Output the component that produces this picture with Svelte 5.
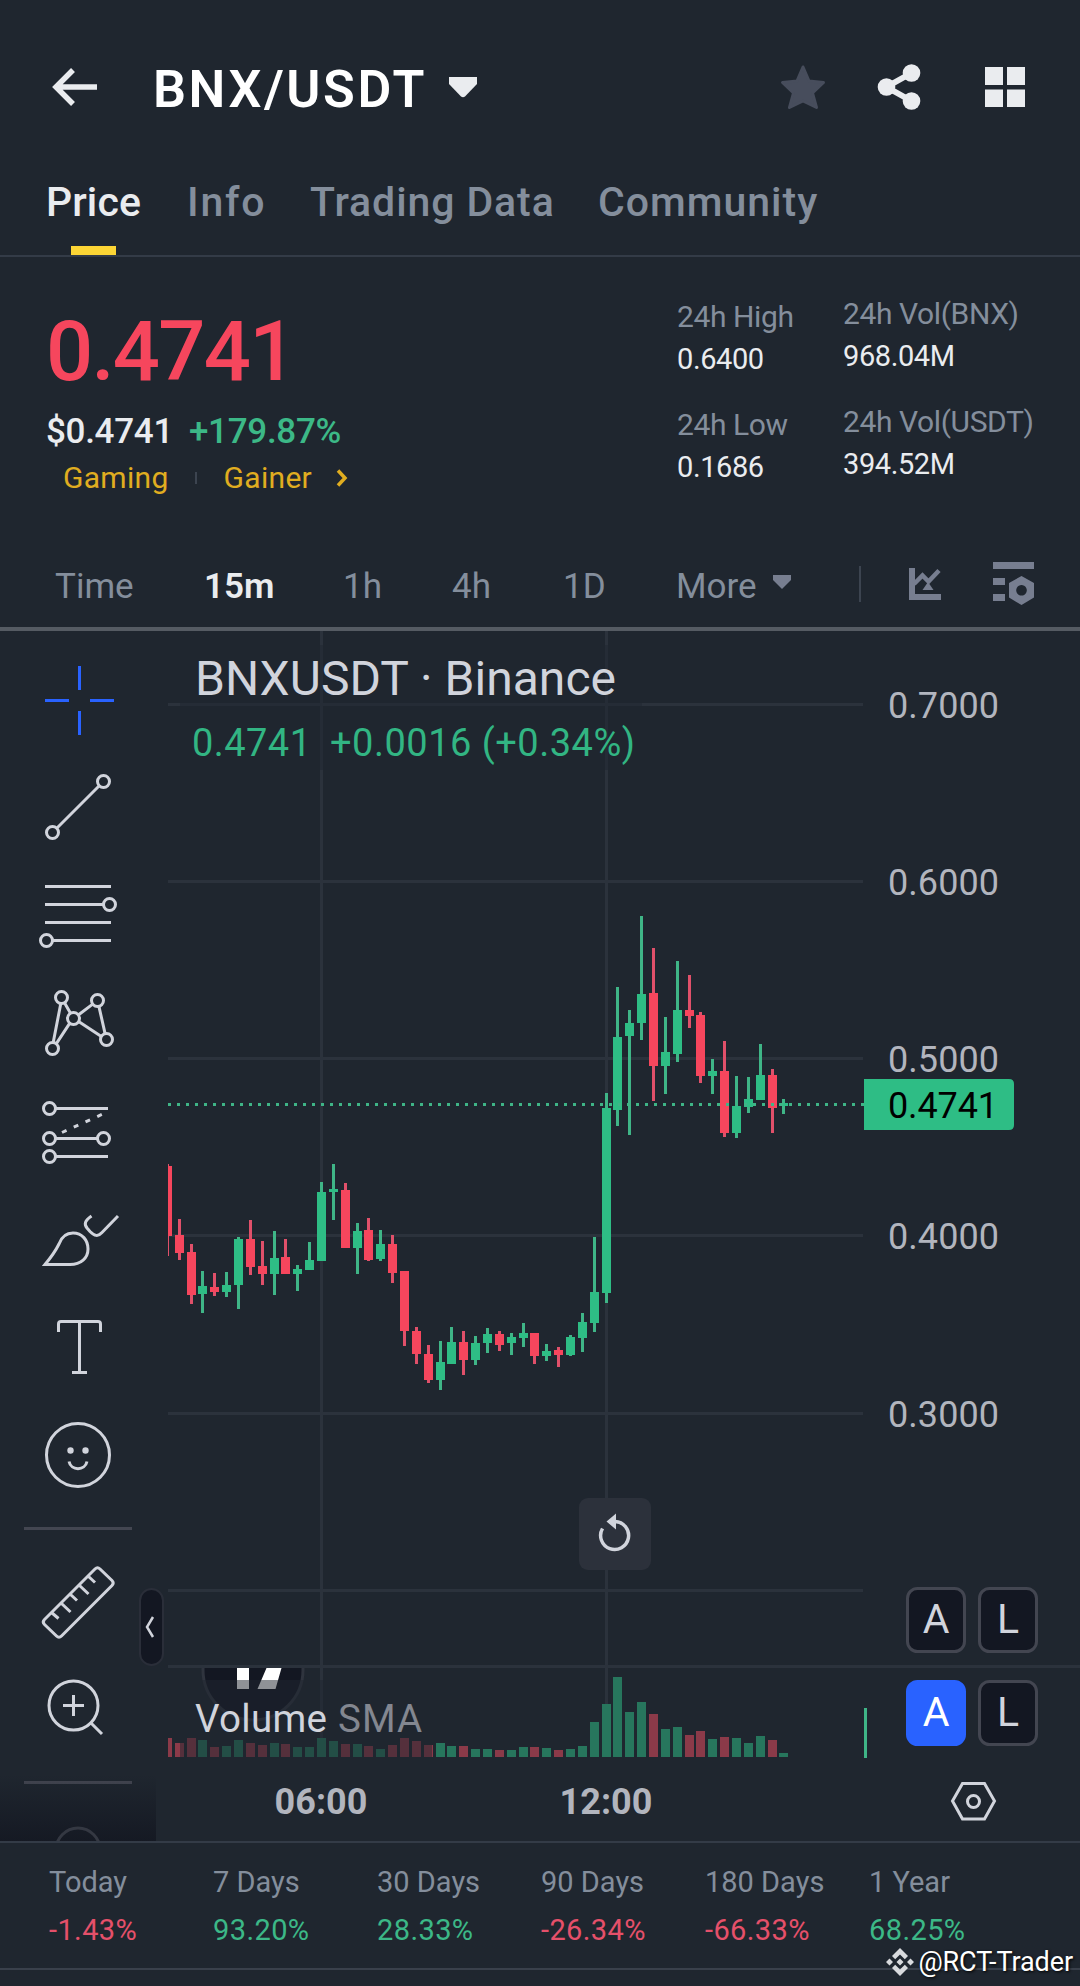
<script>
  const tabs = [
    { name: 'Price', width: 141, spacing: 0.1 },
    { name: 'Info', width: 123, spacing: 1.8 },
    { name: 'Trading Data', width: 288, spacing: 0.9 },
    { name: 'Community', width: 230, spacing: 1 }
  ];

  const stats = [
    { label: '24h High', value: '0.6400' },
    { label: '24h Vol(BNX)', value: '968.04M' },
    { label: '24h Low', value: '0.1686' },
    { label: '24h Vol(USDT)', value: '394.52M' }
  ];

  const intervals = [
    { name: 'Time', width: 149 },
    { name: '15m', width: 139 },
    { name: '1h', width: 109 },
    { name: '4h', width: 111 },
    { name: '1D', width: 113 }
  ];

  const performance = [
    { label: 'Today', value: '-1.43%' },
    { label: '7 Days', value: '93.20%' },
    { label: '30 Days', value: '28.33%' },
    { label: '90 Days', value: '-26.34%' },
    { label: '180 Days', value: '-66.33%' },
    { label: '1 Year', value: '68.25%' }
  ];

  const axis = [
    { label: '0.7000', y: 704 },
    { label: '0.6000', y: 881 },
    { label: '0.5000', y: 1058 },
    { label: '0.4000', y: 1235 },
    { label: '0.3000', y: 1413 }
  ];

  // up, high, body top, body bottom, low, volume top
  const candles = [
    [0, 1164, 1166, 1236, 1256, 1738],
    [0, 1219, 1235, 1253, 1260, 1743],
    [0, 1244, 1252, 1295, 1304, 1738],
    [1, 1271, 1286, 1294, 1313, 1740],
    [0, 1273, 1287, 1292, 1296, 1747],
    [1, 1272, 1285, 1292, 1297, 1746],
    [1, 1237, 1239, 1285, 1309, 1740],
    [0, 1220, 1239, 1267, 1275, 1743],
    [0, 1241, 1266, 1274, 1285, 1745],
    [1, 1231, 1258, 1274, 1295, 1743],
    [0, 1239, 1257, 1274, 1274, 1744],
    [1, 1265, 1269, 1274, 1291, 1747],
    [1, 1242, 1260, 1270, 1270, 1747],
    [1, 1182, 1192, 1261, 1261, 1738],
    [1, 1164, 1189, 1192, 1220, 1741],
    [0, 1183, 1190, 1248, 1248, 1744],
    [1, 1223, 1231, 1248, 1274, 1744],
    [0, 1218, 1230, 1260, 1261, 1746],
    [1, 1230, 1244, 1259, 1261, 1749],
    [0, 1235, 1244, 1273, 1283, 1745],
    [0, 1271, 1271, 1331, 1346, 1738],
    [0, 1327, 1331, 1354, 1364, 1741],
    [0, 1345, 1354, 1380, 1383, 1745],
    [1, 1341, 1362, 1380, 1390, 1743],
    [1, 1327, 1342, 1364, 1364, 1746],
    [0, 1331, 1342, 1360, 1375, 1746],
    [1, 1336, 1343, 1360, 1365, 1749],
    [1, 1328, 1334, 1343, 1353, 1749],
    [0, 1331, 1334, 1345, 1351, 1750],
    [1, 1333, 1337, 1343, 1355, 1750],
    [1, 1323, 1333, 1338, 1347, 1747],
    [0, 1333, 1333, 1356, 1364, 1747],
    [1, 1344, 1351, 1356, 1361, 1748],
    [0, 1347, 1350, 1355, 1367, 1750],
    [1, 1335, 1337, 1355, 1356, 1749],
    [1, 1313, 1322, 1338, 1352, 1746],
    [1, 1237, 1292, 1323, 1332, 1722],
    [1, 1093, 1108, 1293, 1303, 1704],
    [1, 987, 1037, 1110, 1126, 1677],
    [1, 1010, 1023, 1036, 1135, 1712],
    [1, 916, 994, 1023, 1040, 1702],
    [0, 948, 993, 1066, 1101, 1714],
    [1, 1017, 1052, 1066, 1094, 1729],
    [1, 961, 1010, 1054, 1062, 1727],
    [0, 975, 1010, 1016, 1028, 1735],
    [0, 1012, 1015, 1076, 1083, 1731],
    [1, 1059, 1071, 1076, 1094, 1739],
    [0, 1041, 1071, 1133, 1137, 1737],
    [1, 1076, 1106, 1133, 1138, 1738],
    [1, 1077, 1099, 1107, 1113, 1743],
    [1, 1044, 1075, 1100, 1100, 1736],
    [0, 1069, 1075, 1108, 1133, 1740],
    [1, 1099, 1103, 1106, 1114, 1753]
  ].map(([up, high, top, bottom, low, vol], i) => ({
    x: Math.floor(167.33 + 11.857 * i),
    up: up === 1,
    high,
    top,
    bottom,
    low,
    vol
  }));
</script>

<div class="screen">
  <header>
    <svg class="back" viewBox="0 0 46 40" width="46" height="40">
      <path d="M45 20H5M21 3L4 20l17 17" fill="none" stroke="#eaecef" stroke-width="5.5" />
    </svg>
    <h1>BNX/USDT</h1>
    <svg class="caret" viewBox="0 0 30 22" width="30" height="22">
      <path d="M1 1h28v7L17 20.500q-2 1.500-4 0L1 8z" fill="#eaecef" />
    </svg>
    <div class="actions">
      <svg viewBox="0 0 46 46" width="46" height="46">
        <path d="M23 3l6 14 14.500 1.500-11 10.500 4 14.500L23 37 9.500 43.500l4-14.500-11-10.500L17 17z" fill="#474d5c" stroke="#474d5c" stroke-width="3" stroke-linejoin="round" />
      </svg>
      <svg viewBox="0 0 44 46" width="44" height="46">
        <path d="M34.500 9L9.500 23l25 14" fill="none" stroke="#eaecef" stroke-width="6" />
        <circle cx="34.500" cy="9" r="8.800" fill="#eaecef" />
        <circle cx="9.500" cy="23" r="8.800" fill="#eaecef" />
        <circle cx="34.500" cy="37" r="8.800" fill="#eaecef" />
      </svg>
      <svg viewBox="0 0 40 40" width="40" height="40">
        <path d="M0 0h18v18H0zM22 0h18v18H22zM0 22.500h18V40H0zM22 22.500h18V40H22z" fill="#eaecef" />
      </svg>
    </div>
  </header>

  <nav class="tabs">
    {#each tabs as tab, i}
      <div class="tab" class:active={i === 0} style="width: {tab.width}px; letter-spacing: {tab.spacing}px">{tab.name}</div>
    {/each}
  </nav>

  <section class="summary">
    <div class="quote">
      <div class="price">0.4741</div>
      <div class="change"><span>$0.4741</span><span class="up">+179.87%</span></div>
      <div class="tags">
        <span class="gaming">Gaming</span>
        <i></i>
        <span class="gainer">Gainer</span>
        <svg viewBox="0 0 12 18" width="12" height="18">
          <path d="M2 1.500L9 9l-7 7.500" fill="none" stroke="#e0ad20" stroke-width="3.500" />
        </svg>
      </div>
    </div>
    <div class="stats">
      {#each stats as stat, i}
        <div class="stat" class:second={i % 2 === 1}>
          <span class="label">{stat.label}</span>
          <span class="value">{stat.value}</span>
        </div>
      {/each}
    </div>
  </section>

  <div class="intervals">
    {#each intervals as item}
      <span class:active={item.name === '15m'} style="width: {item.width}px">{item.name}</span>
    {/each}
    <span class="more">More</span>
    <svg class="small-caret" viewBox="0 0 18 14" width="18" height="14">
      <path d="M0 0h18v5L9 14 0 5z" fill="#777e90" />
    </svg>
    <i></i>
    <svg class="indicator" viewBox="0 0 32 32" width="32" height="32">
      <path d="M3 0v29h29" fill="none" stroke="#777e90" stroke-width="6" />
      <path d="M5 16l8.500-8.500 6 6L30 2.500" fill="none" stroke="#777e90" stroke-width="4.500" />
      <path d="M19 14l5.500 8h-11z" fill="#777e90" />
    </svg>
    <svg viewBox="0 0 42 44" width="42" height="44">
      <path d="M0 0h41v7H0zM0 16h12v7H0zM0 32h12v7H0z" fill="#777e90" />
      <path fill-rule="evenodd" d="M28.500 14L41 21v14.500l-12.500 7.500L16 35.500V21zM28.500 23a5.300 5.300 0 1 0 .010 0z" fill="#777e90" />
    </svg>
  </div>

  <main>
    <aside>
      <svg class="tool" viewBox="0 0 157 108">
        <path d="M79.500 20v24M79.500 65v24M45 54.500h24M90 54.500h24" stroke="#2962ff" />
      </svg>
      <svg class="tool" viewBox="0 0 157 108">
        <circle cx="52.500" cy="78.500" r="6" />
        <circle cx="103.500" cy="27.500" r="6" />
        <path d="M57 74l42-42" />
      </svg>
      <svg class="tool" viewBox="0 0 157 108">
        <path d="M45 24.500h66M45 42.500h58M45 60.500h66M53 78.500h58" />
        <circle cx="109.500" cy="42.500" r="6" />
        <circle cx="46.500" cy="78.500" r="6" />
      </svg>
      <svg class="tool" viewBox="0 0 157 108">
        <path d="M60.800 33.500L53.200 72.500M64.500 32.700l6 10.600M69.800 53.200l-13.600 20.600M78.300 45l14.400-10.900M78.600 51.600l22.800 14.800M98.900 36.400l6.200 27.200" />
        <circle cx="61.500" cy="27.500" r="6" />
        <circle cx="97.500" cy="30.500" r="6" />
        <circle cx="73.500" cy="48.500" r="6" />
        <circle cx="106.500" cy="69.500" r="6" />
        <circle cx="52.500" cy="78.500" r="6" />
      </svg>
      <svg class="tool" viewBox="0 0 157 108">
        <path d="M56 30.500h52M56 60.500h41M56 78.500h52" />
        <path d="M62 54.500l42-19" stroke-dasharray="5 7.900" />
        <circle cx="49.500" cy="30.500" r="6" />
        <circle cx="49.500" cy="60.500" r="6" />
        <circle cx="103.500" cy="60.500" r="6" />
        <circle cx="49.500" cy="78.500" r="6" />
      </svg>
      <svg class="tool" viewBox="0 0 157 108">
        <path d="M45 78.500C53 69 56 64 59 58c2.500-7 7-11 14-11 9 0 15 7 15 16 0 9-7 15.500-18 15.500zM91.500 30c-7 5-7.500 8-4.500 12l3 3.500c4.500 4.500 8 5.500 12 1L118 30" />
      </svg>
      <svg class="tool" viewBox="0 0 157 108">
        <path d="M58.500 38v-8q0-2.500 2.500-2.500h37q2.500 0 2.500 2.500v8M79.500 28v50M72 78.500h15" />
      </svg>
      <svg class="tool" viewBox="0 0 157 108">
        <circle cx="78" cy="53" r="31.500" />
        <circle cx="70.500" cy="48.500" r="3.200" class="dot" />
        <circle cx="85.500" cy="48.500" r="3.200" class="dot" />
        <path d="M69 59.500c2 9.500 16 9.500 18 0" />
      </svg>
      <hr />
      <svg class="tool" viewBox="0 0 157 108">
        <path d="M44.500 71.500L95 21q2.500-2.500 5 0l12 11.500q2.500 2.500 0 5L61.500 88q-2.500 2.500-5 0l-12-11.500q-2.500-2.500 0-5zM51.500 64.500l7 6M61 55l9.500 9M70 46l7 6.500M79 37l9.500 9M88 28l7 6.500" />
      </svg>
      <svg class="tool" viewBox="0 0 157 108">
        <circle cx="73.500" cy="49.500" r="24.500" />
        <path d="M63 49.500h21M73.500 39v21M91 67l11 11" />
      </svg>
      <hr />
      <div class="fade"></div>
      <svg class="tool peek" viewBox="0 0 157 39">
        <circle cx="78" cy="48" r="22" />
      </svg>
      <button class="collapse" aria-label="Collapse">
        <svg viewBox="0 0 12 24" width="12" height="24">
          <path d="M9 2L3 12l6 10" fill="none" stroke="#d1d4dc" stroke-width="2.500" />
        </svg>
      </button>
    </aside>

    <svg class="chart" viewBox="157 631 923 1210" width="923" height="1210">
      <g fill="#2b323c">
        <rect x="320" y="631" width="3" height="1107" />
        <rect x="605" y="631" width="3" height="1073" />
        {#each axis as line}
          <rect x="168" y={line.y - 1} width="695" height="3" />
        {/each}
        <rect x="168" y="1589" width="695" height="3" />
        <rect x="168" y="1665" width="912" height="3" />
      </g>

      <clipPath id="pane"><rect x="168" y="631" width="696" height="1210" /></clipPath>
      <clipPath id="lower"><rect x="168" y="1668" width="696" height="90" /></clipPath>

      <g clip-path="url(#lower)">
        <circle cx="253" cy="1670" r="50" fill="#131722" stroke="#2f343e" stroke-width="3" />
        <path d="M237 1668h12v21h-12zM266.500 1668h15l-6 21h-18z" fill="#fff" />
      </g>

      <g clip-path="url(#pane)">
        {#each candles as c}
          <rect x={c.x - 4} y={c.vol} width="9" height={1757 - c.vol} fill={c.up ? '#27765d' : '#8b3a49'} />
          <rect x={c.x - 1} y={c.high} width="3" height={c.low - c.high} fill={c.up ? '#3fb587' : '#e0506a'} />
          <rect x={c.x - 4} y={c.top} width="9" height={c.bottom - c.top} fill={c.up ? '#2ebd85' : '#f6465d'} />
        {/each}
      </g>
      <path d="M168 1104.500H864" stroke="#3fb587" stroke-width="3" stroke-dasharray="3 6" />
      <rect x="864" y="1708" width="3" height="50" fill="#3fb587" />

      <rect x="180" y="645" width="462" height="125" fill="#1f262f" opacity="0.5" />
      <rect x="180" y="1680" width="252" height="80" fill="#1f262f" opacity="0.5" />

      <text x="195" y="695" font-size="48" fill="#d1d4dc" textLength="421">BNXUSDT · Binance</text>
      <text x="192" y="756" font-size="38" fill="#32b583" textLength="119">0.4741</text>
      <text x="330" y="756" font-size="38" fill="#32b583" textLength="305">+0.0016 (+0.34%)</text>
      <text x="195" y="1732" font-size="38.500" fill="#d1d4dc" textLength="132">Volume</text>
      <text x="338" y="1732" font-size="38.500" fill="#838790" textLength="84">SMA</text>

      <g font-size="36" fill="#b2b5be">
        {#each axis as line}
          <text x="888" y={line.y + 13.500} textLength="111">{line.label}</text>
        {/each}
        <g font-weight="700" text-anchor="middle">
          <text x="321" y="1814">06:00</text>
          <text x="606" y="1814">12:00</text>
        </g>
      </g>
      <path d="M864 1079h145q5 0 5 5v41q0 5-5 5H864z" fill="#2ebd85" />
      <text x="888" y="1118" font-size="36" fill="#000" textLength="110">0.4741</text>

      <rect x="579" y="1498" width="72" height="72" rx="9" fill="#2c313b" />
      <path d="M602.500 1528.500A14 14 0 1 0 615 1521.500H609" fill="none" stroke="#d1d4dc" stroke-width="3.500" />
      <path d="M616 1513.500l-9.500 8 9.500 8z" fill="#d1d4dc" />

      <g stroke="#434651" stroke-width="3" fill="#131722">
        <rect x="907.500" y="1588.500" width="57" height="63" rx="10" />
        <rect x="979.500" y="1588.500" width="57" height="63" rx="10" />
        <rect x="907.500" y="1681.500" width="57" height="63" rx="10" fill="#2962ff" stroke="#2962ff" />
        <rect x="979.500" y="1681.500" width="57" height="63" rx="10" />
      </g>
      <g font-size="41" fill="#d1d4dc" text-anchor="middle">
        <text x="936" y="1633">A</text>
        <text x="1008" y="1633">L</text>
        <text x="936" y="1726" fill="#fff">A</text>
        <text x="1008" y="1726">L</text>
      </g>
      <g fill="none" stroke="#d1d4dc" stroke-width="3">
        <path d="M962.500 1783.500h22l10 17.500-10 18h-22l-10-18z" />
        <circle cx="973.500" cy="1801.500" r="6" />
      </g>
    </svg>
  </main>

  <footer>
    {#each performance as item}
      <div class="period">
        <span>{item.label}</span>
        <span class="value" class:up={item.value[0] !== '-'} class:down={item.value[0] === '-'}>{item.value}</span>
      </div>
    {/each}
    <div class="watermark">
      <svg viewBox="0 0 28 28" width="28" height="28" fill="#d8dadd">
        <path d="M14 0l8 8-3.200 3.200L14 6.400l-4.800 4.800L6 8zM14 28l8-8-3.200-3.200-4.800 4.800-4.800-4.800L6 20zM14 10.500l3.500 3.500-3.500 3.500-3.500-3.500zM3.500 10.500L7 14l-3.500 3.500L0 14zM24.500 10.500L28 14l-3.500 3.500L21 14z" />
      </svg>
      <span>@RCT-Trader</span>
    </div>
  </footer>
</div>

<style>
  :global(body) {
    background: #1f262f;
  }

  .screen {
    width: 1080px;
    height: 1986px;
    overflow: hidden;
    background: #1f262f;
    color: #eaecef;
    font-family: Roboto, "Liberation Sans", sans-serif;
  }

  svg {
    display: block;
  }

  header {
    display: flex;
    align-items: center;
    box-sizing: border-box;
    height: 174px;
    padding: 0 55px 0 52px;
  }

  h1 {
    margin: 6px 0 0 55px;
    width: 295px;
    font-size: 52px;
    font-weight: 600;
    letter-spacing: 2.6px;
    line-height: 60px;
    color: #fff;
  }

  .actions {
    display: flex;
    align-items: center;
    margin-left: auto;
  }

  .actions svg:nth-child(2) {
    margin: 0 64px 0 51px;
  }

  .tabs {
    display: flex;
    box-sizing: border-box;
    height: 83px;
    padding-left: 46px;
    border-bottom: 2px solid #333b47;
  }

  .tab {
    position: relative;
    font-size: 41px;
    font-weight: 500;
    line-height: 56px;
    color: #848e9c;
  }

  .tab.active {
    color: #eaecef;
  }

  .tab.active::after {
    content: "";
    position: absolute;
    left: 25px;
    bottom: 0;
    width: 45px;
    height: 9px;
    background: #fcd535;
  }

  .summary {
    display: flex;
    justify-content: space-between;
    box-sizing: border-box;
    height: 287px;
    padding: 36px 0 0 46px;
  }

  .price {
    padding-top: 14px;
    font-size: 83px;
    font-weight: 500;
    letter-spacing: -1.7px;
    line-height: 90px;
    color: #f6465d;
  }

  .change {
    display: flex;
    gap: 16px;
    padding-top: 12px;
    font-size: 35px;
    font-weight: 500;
    letter-spacing: -0.3px;
    line-height: 46px;
  }

  .up {
    color: #3cb887;
  }

  .down {
    color: #e5506a;
  }

  .tags {
    display: flex;
    align-items: center;
    padding-left: 17px;
    font-size: 30px;
    letter-spacing: 0.3px;
    line-height: 46px;
    color: #e0ad20;
  }

  .tags i {
    width: 2px;
    height: 12px;
    margin: 0 27px 0 26px;
    background: #3c4450;
  }

  .tags svg {
    margin-left: 24px;
  }

  .stats {
    display: grid;
    grid-template-columns: 166px 237px;
    grid-auto-rows: 108px;
  }

  .stat {
    display: flex;
    flex-direction: column;
    padding-top: 3px;
    font-size: 30px;
    letter-spacing: -0.4px;
    line-height: 42px;
  }

  .stat.second {
    padding-top: 0;
  }

  .stat .label {
    color: #848e9c;
  }

  .stat .value {
    font-size: 29px;
  }

  .intervals {
    display: flex;
    align-items: center;
    box-sizing: border-box;
    height: 87px;
    padding: 0 45px 4px 55px;
    border-bottom: 4px solid #555b63;
    font-size: 35px;
    color: #848e9c;
  }

  .intervals span {
    padding-top: 5px;
  }

  .intervals .active {
    color: #eaecef;
    font-weight: 600;
  }

  .intervals .more {
    width: 97px;
  }

  .intervals i {
    width: 2px;
    height: 36px;
    margin: 0 48px 0 68px;
    background: #3c4450;
  }

  .small-caret {
    margin-bottom: 4px;
  }

  .indicator {
    margin-right: 52px;
  }

  main {
    display: flex;
    height: 1210px;
  }

  aside {
    position: relative;
    width: 157px;
    padding-top: 15px;
    box-sizing: border-box;
  }

  .tool {
    width: 157px;
    height: 108px;
    fill: none;
    stroke: #d1d4dc;
    stroke-width: 3;
  }

  .tool .dot {
    fill: #d1d4dc;
    stroke: none;
  }

  .peek {
    position: relative;
    height: 39px;
    stroke: #343842;
  }

  hr {
    width: 108px;
    height: 3px;
    margin: 17px 0 18px 24px;
    border: 0;
    background: #434651;
  }

  .fade {
    position: absolute;
    left: 0;
    bottom: 0;
    width: 156px;
    height: 66px;
    background: linear-gradient(rgba(20, 24, 34, 0), rgba(20, 24, 34, 0.9));
  }

  .collapse {
    position: absolute;
    left: 139px;
    top: 957px;
    width: 25px;
    height: 78px;
    padding: 0 0 0 3px;
    border: 2px solid #2a2e39;
    border-radius: 13px;
    background: #131722;
  }

  .chart {
    font-family: Roboto, "Liberation Sans", sans-serif;
  }

  footer {
    position: relative;
    display: flex;
    box-sizing: border-box;
    height: 129px;
    padding: 15px 0 0 49px;
    border-top: 2px solid #333b47;
    border-bottom: 2px solid #39404b;
  }

  .period {
    display: flex;
    flex-direction: column;
    width: 164px;
    font-size: 29px;
    line-height: 48px;
    color: #848e9c;
    white-space: nowrap;
  }

  .period .value {
    letter-spacing: 0.4px;
  }

  .period .up {
    color: #3cb887;
  }

  .period .down {
    color: #e5506a;
  }

  .watermark {
    position: absolute;
    right: 7px;
    bottom: -9px;
    display: flex;
    align-items: center;
    gap: 4px;
    font-size: 27px;
    letter-spacing: -0.1px;
    line-height: 30px;
    color: #fff;
    text-shadow: 1px 1px 3px #000;
  }
</style>
